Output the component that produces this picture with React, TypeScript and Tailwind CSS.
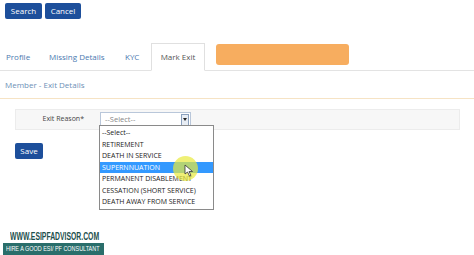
import { useState } from 'react';

const reasons = [
  '--Select--',
  'RETIREMENT',
  'DEATH IN SERVICE',
  'SUPERNNUATION',
  'PERMANENT DISABLEMENT',
  'CESSATION (SHORT SERVICE)',
  'DEATH AWAY FROM SERVICE',
];

export default function App() {
  const [hovered] = useState(3);

  return (
    <div className="relative w-[474px] h-[255px] overflow-hidden bg-white font-['Open_Sans',sans-serif] text-[#333]">
      {/* Top actions */}
      <div className="flex gap-[3px] pl-[5px] pt-[3px]">
        <button className="h-[16px] w-[37px] rounded-[2px] bg-[#1d4f9b] text-[8px] leading-none text-white">Search</button>
        <button className="h-[16px] w-[36px] rounded-[2px] bg-[#1d4f9b] text-[8px] leading-none text-white">Cancel</button>
      </div>

      {/* Tabs */}
      <div className="mt-[24px] flex h-[28px] items-stretch border-b border-[#e3e3e3] pl-[6px] text-[8px]">
        <div className="flex w-[43px] items-center text-[#4b79b0]">Profile</div>
        <div className="flex w-[76px] items-center text-[#4b79b0]">Missing Details</div>
        <div className="flex w-[26px] items-center text-[#4b79b0]">KYC</div>
        <div className="-mb-px flex h-[28px] w-[54px] items-center justify-center border border-[#e0e0e0] border-b-white bg-white text-[#555]">
          Mark Exit
        </div>
        <div className="ml-[11px] mt-[1px] h-[21px] w-[133px] rounded-[3px] bg-[#f7ad5f]" />
      </div>

      {/* Section title */}
      <div className="flex h-[28px] items-center border-b border-[#f6e3c4] pl-[5px] text-[8px] text-[#6d8fb6]">
        Member - Exit Details
      </div>

      {/* Form row */}
      <div className="ml-[15px] mr-[14px] mt-[10px] flex h-[21px] items-center border border-[#ececec] bg-[#f7f7f7]">
        <div className="w-[68px] text-right text-[7px] text-[#444]">Exit Reason*</div>
        <div className="ml-[16px] flex h-[16px] w-[91px] items-center border border-[#b9c7da] bg-white">
          <span className="flex-1 pl-[4px] text-[7.5px] text-[#888]">--Select--</span>
          <span className="mr-[1px] flex h-[12px] w-[8px] items-center justify-center border border-[#8aa0bd] bg-[#e8edf4]">
            <span className="border-x-[2px] border-t-[3px] border-x-transparent border-t-[#222]" />
          </span>
        </div>
      </div>

      <div className="relative">
        <button className="ml-[15px] mt-[13px] h-[16px] w-[28px] rounded-[2px] bg-[#1d4f9b] text-[8px] leading-none text-white">Save</button>

        {/* Open dropdown list */}
        <div className="absolute left-[99px] top-[-5px] w-[115px] border border-[#8a8a8a] bg-white py-[1px]">
          {reasons.map((r, i) => (
            <div
              key={r}
              className={
                i === hovered
                  ? 'h-[11.5px] bg-[#3399ff] pl-[2px] text-[7px] leading-[11.5px] text-white'
                  : 'h-[11.5px] pl-[2px] text-[7px] leading-[11.5px] text-[#222]'
              }
            >
              {r}
            </div>
          ))}
        </div>
      </div>

      {/* Cursor highlight */}
      <div className="absolute left-[173px] top-[156px] h-[25px] w-[25px] rounded-full bg-[#e8ea3c]/70" />
      <svg className="absolute left-[184px] top-[164px]" width="10" height="13" viewBox="0 0 10 13">
        <path d="M1 1 L1 10 L3.5 8 L5.5 12 L7 11.3 L5 7.5 L8.5 7.5 Z" fill="#fff" stroke="#333" strokeWidth="0.8" />
      </svg>

      {/* Watermark */}
      <div className="absolute left-[10px] top-[231px] origin-left whitespace-nowrap font-['Liberation_Sans',sans-serif] text-[10.5px] font-bold leading-[11px] text-[#1c4f4c] [transform:scaleX(0.65)]">
        WWW.ESIPFADVISOR.COM
      </div>
      <div className="absolute left-[3px] top-[243px] h-[12px] w-[101px] bg-[#2a6e6b]" />
      <div className="absolute left-[6px] top-[244px] origin-left whitespace-nowrap font-['Liberation_Sans',sans-serif] text-[8px] leading-[10px] text-white [transform:scaleX(0.68)]">
        HIRE A GOOD ESI/ PF CONSULTANT
      </div>
    </div>
  );
}
